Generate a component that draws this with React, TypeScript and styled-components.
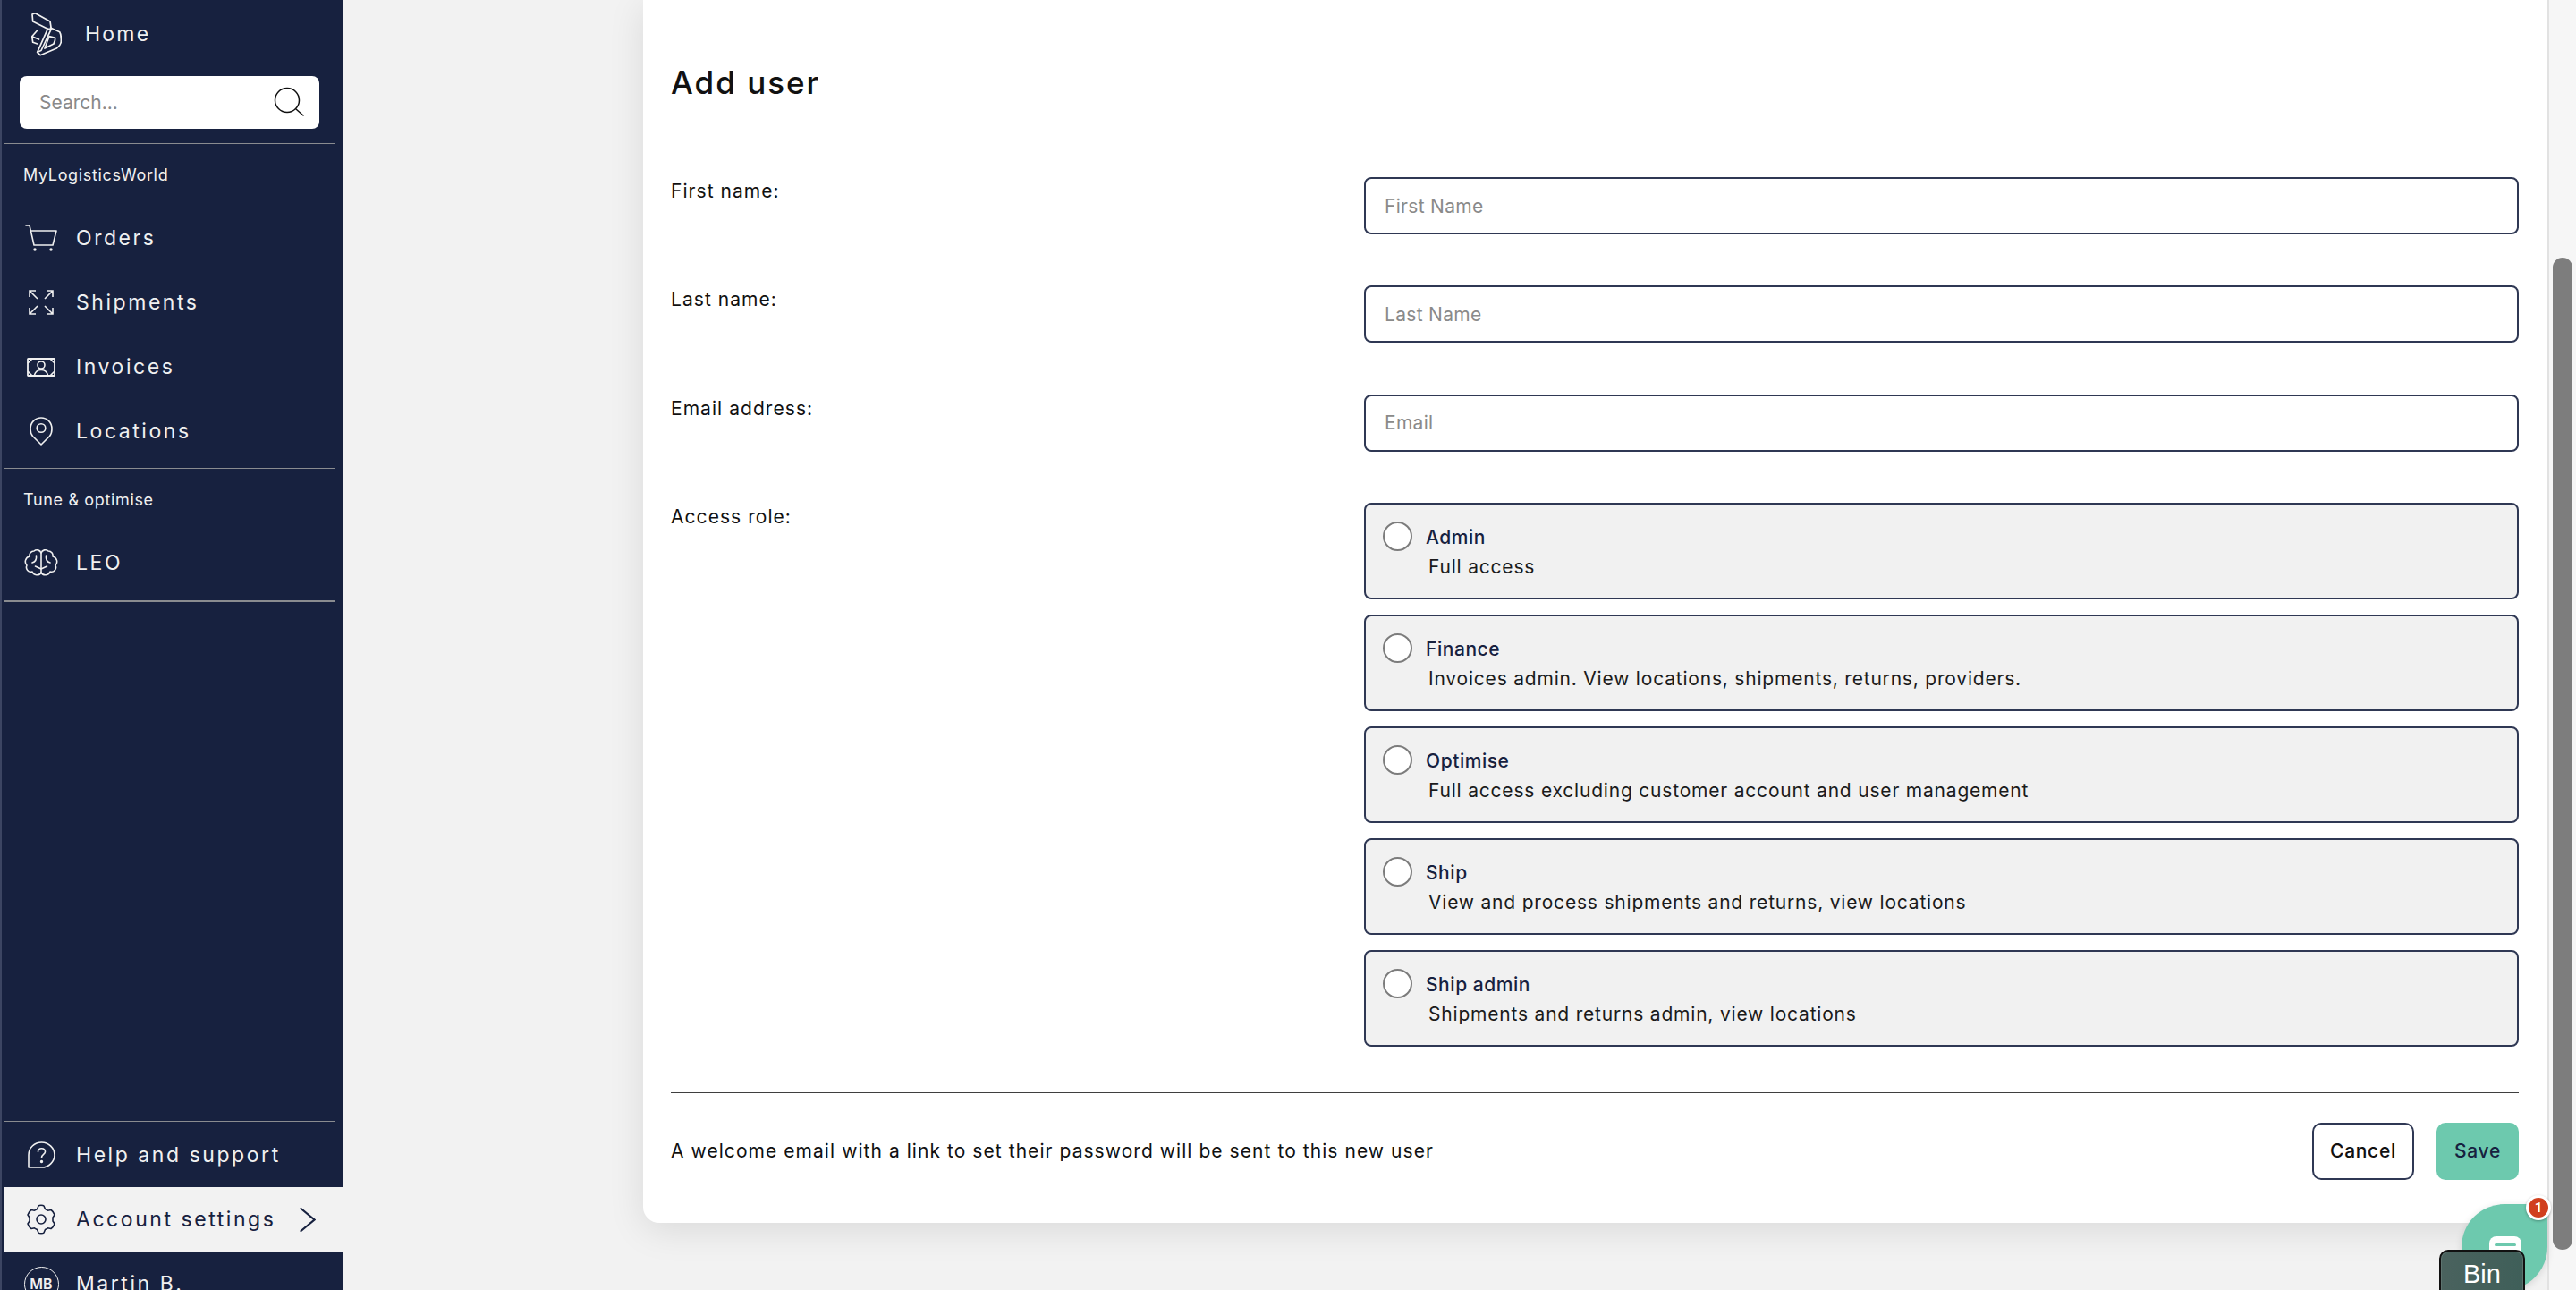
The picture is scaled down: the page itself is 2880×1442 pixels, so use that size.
import React from "react";
import styled, { createGlobalStyle } from "styled-components";

const Global = createGlobalStyle`
  html, body { margin: 0; padding: 0; background: #f2f2f2; overflow: hidden; }
  * { box-sizing: border-box; }
  body { font-family: "Inter", "Liberation Sans", sans-serif; }
`;

const Page = styled.div`
  position: relative;
  display: grid;
  grid-template-columns: 384px 1fr 32px;
  height: 100vh;
  overflow: hidden;
  background: #f2f2f2;
`;

const Sidebar = styled.aside`
  display: flex;
  flex-direction: column;
  height: 1471px;
  background: #17213f;
  border-left: 2px solid #3c4562;
  padding-left: 3px;
  color: #f0f0f0;
`;

const HomeRow = styled.div`
  display: flex;
  align-items: center;
  height: 76px;
  padding-left: 30px;
  flex-shrink: 0;
`;

const HomeLabel = styled.span`
  margin-left: 26px;
  font-size: 23px;
  letter-spacing: 2.2px;
`;

const SearchBox = styled.div`
  display: flex;
  align-items: center;
  justify-content: space-between;
  margin: 9px 0 0 17px;
  width: 335px;
  height: 59px;
  flex-shrink: 0;
  padding: 0 16px 0 22px;
  background: #fff;
  border-radius: 8px;
`;

const SearchInput = styled.input`
  flex: 1;
  min-width: 0;
  padding: 0;
  border: 0;
  outline: 0;
  background: transparent;
  font: inherit;
  font-size: 21px;
  &::placeholder { color: #8a8a8a; opacity: 1; }
`;

const Rule = styled.hr<{ $top: number; $thick?: boolean }>`
  margin: ${(p) => p.$top}px 0 0 0;
  width: 369px;
  height: ${(p) => (p.$thick ? 2 : 1)}px;
  flex-shrink: 0;
  border: 0;
  background: #8a8c90;
`;

const SectionLabel = styled.div`
  display: flex;
  align-items: center;
  height: 68px;
  flex-shrink: 0;
  padding-left: 21px;
  font-size: 18px;
  letter-spacing: 0.65px;
`;

const NavItem = styled.div<{ $active?: boolean }>`
  display: flex;
  align-items: center;
  height: 72.25px;
  flex-shrink: 0;
  padding-left: 21px;
  padding-top: 1px;
  font-size: 23px;
  letter-spacing: 2.55px;
  white-space: nowrap;
  background: ${(p) => (p.$active ? "#f2f2f2" : "transparent")};
  color: ${(p) => (p.$active ? "#17213f" : "#f0f0f0")};
`;

const IconSlot = styled.span`
  display: flex;
  align-items: center;
  justify-content: center;
  width: 40px;
  margin-right: 19px;
  flex-shrink: 0;
`;

const NavChevron = styled.span`
  display: flex;
  margin-left: 27px;
`;

const SideSpacer = styled.div`
  flex: 1;
`;

const Avatar = styled.span`
  display: flex;
  align-items: center;
  justify-content: center;
  width: 39px;
  height: 39px;
  border: 1.5px solid #f0f0f0;
  border-radius: 50%;
  font-size: 16px;
  font-weight: 600;
  letter-spacing: 0;
`;

const Main = styled.main`
  min-width: 0;
  padding-left: 335px;
`;

const Card = styled.section`
  display: flex;
  flex-direction: column;
  padding: 0 32px 48px 31px;
  background: #fff;
  border-radius: 0 0 18px 18px;
  box-shadow: 0 8px 40px rgba(0, 0, 0, 0.1);
`;

const Title = styled.h1`
  display: flex;
  align-items: center;
  height: 198px;
  margin: 0;
  padding-bottom: 14px;
  font-size: 35px;
  font-weight: 500;
  letter-spacing: 2px;
  color: #111;
`;

const FormGrid = styled.div`
  display: grid;
  grid-template-columns: 775px 1fr;
  row-gap: 57.3px;
`;

const FieldLabel = styled.label`
  padding-top: 1px;
  font-size: 21px;
  line-height: 30px;
  letter-spacing: 1.05px;
  color: #111;
`;

const TextInput = styled.input`
  display: block;
  width: 100%;
  height: 64px;
  padding: 0 21px;
  background: #fff;
  border: 2px solid #2f3854;
  border-radius: 8px;
  outline: 0;
  font: inherit;
  font-size: 21px;
  letter-spacing: 0.3px;
  &::placeholder { color: #8a8a8a; opacity: 1; }
`;

const RoleList = styled.div`
  display: flex;
  flex-direction: column;
  gap: 17px;
`;

const RoleCard = styled.label`
  display: block;
  height: 108px;
  padding: 19px 19px 0;
  background: #f1f1f1;
  border: 2px solid #2f3854;
  border-radius: 8px;
`;

const RoleHead = styled.span`
  display: flex;
  align-items: center;
  gap: 15px;
`;

const RoleRadio = styled.input`
  appearance: none;
  width: 33px;
  height: 33px;
  margin: 0;
  background: #fff;
  border: 2px solid #7c7c7c;
  border-radius: 50%;
`;

const RoleName = styled.span`
  position: relative;
  top: 1px;
  font-size: 21px;
  font-weight: 500;
  letter-spacing: 0.55px;
  color: #17213f;
`;

const RoleDesc = styled.span`
  display: block;
  margin: 3px 0 0 51px;
  font-size: 21px;
  line-height: 30px;
  letter-spacing: 0.8px;
  color: #1b1b1b;
`;

const Divider = styled.hr`
  width: 100%;
  height: 1px;
  margin: 51px 0 33px;
  border: 0;
  background: #3f3f3f;
`;

const Footer = styled.div`
  display: flex;
  align-items: center;
`;

const FooterNote = styled.p`
  flex: 1;
  margin: 0;
  font-size: 21px;
  letter-spacing: 1.06px;
  color: #111;
`;

const Button = styled.button<{ $primary?: boolean }>`
  height: 64px;
  width: ${(p) => (p.$primary ? 92 : 114)}px;
  margin-left: ${(p) => (p.$primary ? 25 : 0)}px;
  border: ${(p) => (p.$primary ? "0" : "2px solid #2f3854")};
  border-radius: 10px;
  background: ${(p) => (p.$primary ? "#6dc9ae" : "#fff")};
  color: ${(p) => (p.$primary ? "#17213f" : "#111")};
  font: inherit;
  font-size: 21px;
  font-weight: 500;
  letter-spacing: 0.7px;
`;

const ScrollTrack = styled.div`
  padding: 288px 4px 0 4px;
  background: #f6f6f6;
  border-left: 2px solid #e2e2e2;
`;

const ScrollThumb = styled.div`
  width: 22px;
  height: 1109px;
  background: #7d7d7d;
  border-radius: 11px;
`;

const ChatBubble = styled.div`
  position: absolute;
  left: 2752px;
  top: 1346px;
  width: 96px;
  height: 96px;
  background: #6dc9ae;
  border-radius: 50% 10px 50% 50%;
  box-shadow: 0 2px 8px rgba(0, 0, 0, 0.12);
`;

const ChatGlyph = styled.div`
  position: absolute;
  left: 31px;
  top: 36px;
  width: 36px;
  height: 40px;
  padding: 8px 6px 0;
  background: #fff;
  border-radius: 8px;
  &::before {
    content: "";
    display: block;
    height: 3px;
    background: #6dc9ae;
    border-radius: 2px;
  }
`;

const ChatBadge = styled.span`
  position: absolute;
  left: 72px;
  top: -10px;
  display: flex;
  align-items: center;
  justify-content: center;
  width: 28px;
  height: 28px;
  background: #d13f1e;
  border: 3px solid #fff;
  border-radius: 50%;
  color: #fff;
  font-family: "Roboto", sans-serif;
  font-size: 15px;
  font-weight: 700;
  box-shadow: 0 1px 3px rgba(0, 0, 0, 0.3);
`;

const BinTip = styled.div`
  position: absolute;
  left: 2727px;
  top: 1397px;
  width: 96px;
  height: 60px;
  padding-top: 9px;
  text-align: center;
  background: linear-gradient(90deg, #4a625e, #3f5f59);
  border: 2px solid #111;
  border-radius: 10px;
  box-shadow: inset 0 0 0 1px #5d736f;
  color: #fff;
  font-family: "Liberation Sans", sans-serif;
  font-size: 29px;
`;

const line = { fill: "none", stroke: "currentColor", strokeWidth: 1.6, strokeLinecap: "round", strokeLinejoin: "round" } as const;

const Logo = () => (
  <svg width="34" height="49" viewBox="0 0 34 49" {...line} strokeWidth={1.7}>
    <path d="M1 2 L4.3 0.7 L21 10 L22.3 18.3 L18.3 18.3 L1.7 10 Z" />
    <path d="M18.3 18.3 L6.7 44.3 L10 47.7 L28.3 40 C32 37 33.5 34 33.3 31.7 C33.5 27 33 24 31.7 21.7 L21.5 17" />
    <path d="M22.3 18.3 L11 42.5 L6.7 44.3" />
    <path d="M20 26.7 L26.7 28.3 C27 31 26 33 25 35 L15 40 Z" />
    <path d="M6.7 20 L0.7 26.7 L1.7 33.3 L6.7 35 M0.7 26.7 L8.5 30" />
  </svg>
);

const SearchIcon = () => (
  <svg width="35" height="35" viewBox="0 0 35 35" fill="none" stroke="#111" strokeWidth="1.5" strokeLinecap="round">
    <circle cx="15" cy="15" r="13.5" />
    <path d="M25 25 L33 32" />
  </svg>
);

const CartIcon = () => (
  <svg width="36" height="30" viewBox="0 0 36 30" {...line}>
    <path d="M1 1 H5 L10 23 H31 L35 7 H7" />
    <circle cx="11" cy="28" r="0.9" fill="currentColor" />
    <circle cx="29" cy="28" r="0.9" fill="currentColor" />
  </svg>
);

const ExpandIcon = () => (
  <svg width="28" height="28" viewBox="0 0 28 28" {...line} strokeLinecap="butt" strokeLinejoin="miter">
    <path d="M1 8 V1 H8 M1 1 L10 10 M20 1 H27 V8 M27 1 L18 10 M1 20 V27 H8 M1 27 L10 18 M27 20 V27 H20 M27 27 L18 18" />
  </svg>
);

const InvoiceIcon = () => (
  <svg width="32" height="21" viewBox="0 0 32 21" {...line} strokeLinecap="butt">
    <rect x="1" y="1" width="30" height="19" rx="0.5" strokeWidth="1.8" />
    <path d="M1 6 L6 1 M26 1 L31 6 M1 15 L6 20 M26 20 L31 15" />
    <circle cx="16" cy="8" r="4" />
    <path d="M8.5 19 C10 14.5 13 13.5 16 13.5 C19 13.5 22 14.5 23.5 19" />
  </svg>
);

const PinIcon = () => (
  <svg width="26" height="32" viewBox="0 0 26 32" {...line}>
    <path d="M13 31 L3.5 21.5 C1.8 19.5 1 17 1 13.5 C1 6 6.5 1 13 1 C19.5 1 25 6 25 13.5 C25 17 24.2 19.5 22.5 21.5 Z" />
    <circle cx="13" cy="12.5" r="4.8" />
  </svg>
);

const BrainIcon = () => (
  <svg width="38" height="31" viewBox="0 0 38 31" {...line}>
    <path d="M19 5 A5 5 0 0 0 11 3 A5 5 0 0 0 6 9 A6 6 0 0 0 3 19 A5 5 0 0 0 9 26 A5.5 5.5 0 0 0 19 27 V5 Z" />
    <path d="M19 5 A5 5 0 0 1 27 3 A5 5 0 0 1 32 9 A6 6 0 0 1 35 19 A5 5 0 0 1 29 26 A5.5 5.5 0 0 1 19 27" />
    <path d="M13.5 8 C14 12 12.5 15 9 16 M24.5 8 C24 12 25.5 15 29 16 M19 23 L12.5 20 M19 23 L25.5 20" />
  </svg>
);

const HelpIcon = () => (
  <svg width="31" height="30" viewBox="0 0 31 30" {...line}>
    <path d="M1 29 V15 C1 7 7.5 1 15.5 1 C23.5 1 30 7.5 30 15 C30 22.5 23.5 29 15.5 29 Z" />
    <path d="M11.5 11.5 C11.5 6.5 19.5 6.5 19.5 11.5 C19.5 14.5 15.5 14.5 15.5 18" />
    <circle cx="15.5" cy="22.5" r="0.9" fill="currentColor" />
  </svg>
);

const GearIcon = () => (
  <svg width="34" height="34" viewBox="0 0 34 34" {...line}>
    <path d="M14 2 C15 1 19 1 20 2 L21.5 5.5 C22.5 6 23.5 6.5 24.5 7.2 L28 6.5 C29.5 7.5 31.5 10.5 32 12 L30 15 V19 L32 22 C31.5 23.5 29.5 26.5 28 27.5 L24.5 26.8 C23.5 27.5 22.5 28 21.5 28.5 L20 32 C19 33 15 33 14 32 L12.5 28.5 C11.5 28 10.5 27.5 9.5 26.8 L6 27.5 C4.5 26.5 2.5 23.5 2 22 L4 19 V15 L2 12 C2.5 10.5 4.5 7.5 6 6.5 L9.5 7.2 C10.5 6.5 11.5 6 12.5 5.5 Z" />
    <circle cx="17" cy="17" r="5" />
  </svg>
);

const ChevronIcon = () => (
  <svg width="18" height="27" viewBox="0 0 18 27" fill="none" stroke="currentColor" strokeWidth="2.2" strokeLinecap="round">
    <path d="M1.5 1 L16.5 13.5 L1.5 26" />
  </svg>
);

const roles = [
  ["Admin", "Full access"],
  ["Finance", "Invoices admin. View locations, shipments, returns, providers."],
  ["Optimise", "Full access excluding customer account and user management"],
  ["Ship", "View and process shipments and returns, view locations"],
  ["Ship admin", "Shipments and returns admin, view locations"],
];

const fields = [
  ["First name:", "First Name"],
  ["Last name:", "Last Name"],
  ["Email address:", "Email"],
];

export default function App() {
  return (
    <Page>
      <Global />
      <Sidebar>
        <HomeRow>
          <Logo />
          <HomeLabel>Home</HomeLabel>
        </HomeRow>
        <SearchBox>
          <SearchInput placeholder="Search..." readOnly />
          <SearchIcon />
        </SearchBox>
        <Rule $top={16} />
        <SectionLabel>MyLogisticsWorld</SectionLabel>
        <NavItem><IconSlot><CartIcon /></IconSlot>Orders</NavItem>
        <NavItem><IconSlot><ExpandIcon /></IconSlot>Shipments</NavItem>
        <NavItem><IconSlot><InvoiceIcon /></IconSlot>Invoices</NavItem>
        <NavItem><IconSlot><PinIcon /></IconSlot>Locations</NavItem>
        <Rule $top={5} />
        <SectionLabel>Tune &amp; optimise</SectionLabel>
        <NavItem><IconSlot><BrainIcon /></IconSlot>LEO</NavItem>
        <Rule $top={7} $thick />
        <SideSpacer />
        <Rule $top={0} />
        <NavItem><IconSlot><HelpIcon /></IconSlot>Help and support</NavItem>
        <NavItem $active><IconSlot><GearIcon /></IconSlot>Account settings<NavChevron><ChevronIcon /></NavChevron></NavItem>
        <NavItem><IconSlot><Avatar>MB</Avatar></IconSlot>Martin B.</NavItem>
      </Sidebar>
      <Main>
        <Card>
          <Title>Add user</Title>
          <FormGrid>
            {fields.map(([label, placeholder]) => (
              <React.Fragment key={label}>
                <FieldLabel>{label}</FieldLabel>
                <TextInput placeholder={placeholder} readOnly />
              </React.Fragment>
            ))}
            <FieldLabel>Access role:</FieldLabel>
            <RoleList>
              {roles.map(([name, desc]) => (
                <RoleCard key={name}>
                  <RoleHead>
                    <RoleRadio type="radio" name="role" />
                    <RoleName>{name}</RoleName>
                  </RoleHead>
                  <RoleDesc>{desc}</RoleDesc>
                </RoleCard>
              ))}
            </RoleList>
          </FormGrid>
          <Divider />
          <Footer>
            <FooterNote>A welcome email with a link to set their password will be sent to this new user</FooterNote>
            <Button>Cancel</Button>
            <Button $primary>Save</Button>
          </Footer>
        </Card>
      </Main>
      <ScrollTrack>
        <ScrollThumb />
      </ScrollTrack>
      <ChatBubble>
        <ChatGlyph />
        <ChatBadge>1</ChatBadge>
      </ChatBubble>
      <BinTip>Bin</BinTip>
    </Page>
  );
}
